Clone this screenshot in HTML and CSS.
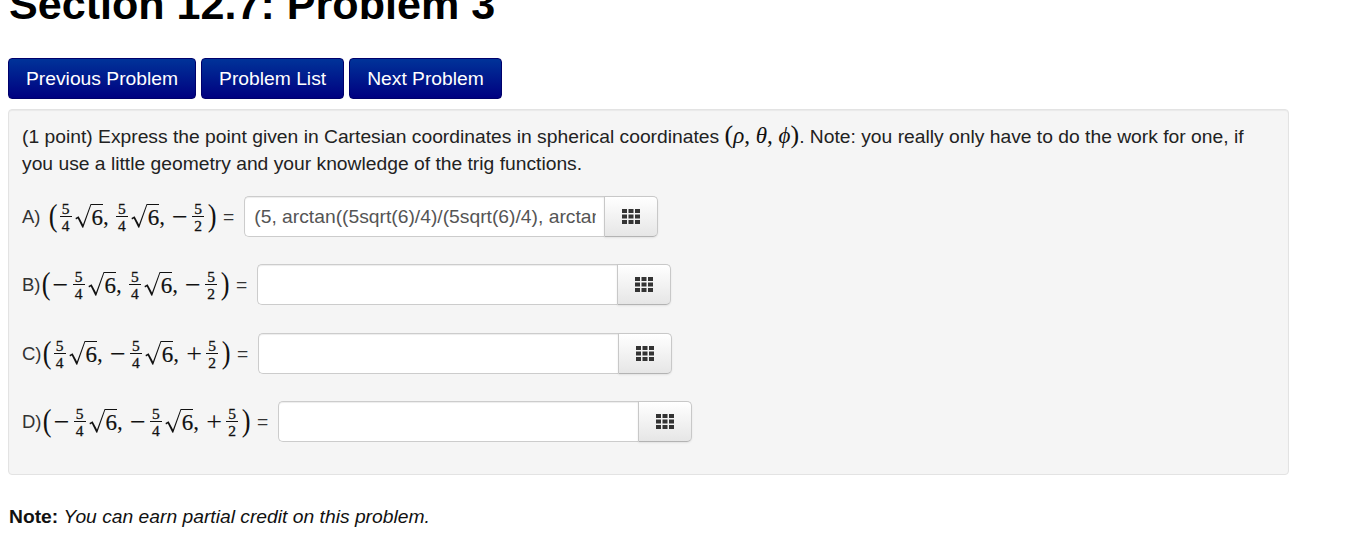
FILE: index.html
```html
<!DOCTYPE html>
<html lang="en">
<head>
<meta charset="utf-8">
<title>Section 12.7: Problem 3</title>
<link rel="stylesheet" href="styles.css">
</head>
<body>
<svg class="defs" width="0" height="0" aria-hidden="true">
  <defs>
    <symbol id="grid" viewBox="0 0 18 15">
      <g fill="#333">
        <rect x="0" y="0" width="5" height="4"/><rect x="6.5" y="0" width="5" height="4"/><rect x="13" y="0" width="5" height="4"/>
        <rect x="0" y="5.5" width="5" height="4"/><rect x="6.5" y="5.5" width="5" height="4"/><rect x="13" y="5.5" width="5" height="4"/>
        <rect x="0" y="11" width="5" height="4"/><rect x="6.5" y="11" width="5" height="4"/><rect x="13" y="11" width="5" height="4"/>
      </g>
    </symbol>
    <symbol id="radical" viewBox="0 0 17 24" preserveAspectRatio="none">
      <path d="M0.5 14 L3.6 12.2 L8 20.6 L15.6 0 L17 0 L17 1 L16.2 1 L8.2 23.8 L7.4 23.8 L2.8 14.6 L1 15.4 Z" fill="#111"/>
    </symbol>
  </defs>
</svg>
<h1 class="title">Section 12.7: Problem 3</h1>
<nav class="nav">
  <a class="nav-btn" href="#">Previous Problem</a>
  <a class="nav-btn" href="#">Problem List</a>
  <a class="nav-btn" href="#">Next Problem</a>
</nav>
<main class="well">
  <p class="prompt">(1 point) Express the point given in Cartesian coordinates in spherical coordinates <span class="math inline-math"><span class="big">(</span><i>ρ</i>, <i>θ</i>, <i>ϕ</i><span class="big">)</span></span>. Note: you really only have to do the work for one, if you use a little geometry and your knowledge of the trig functions.</p>

  <div class="row row-a">
    <span class="label">A)</span>
    <span class="math expr"><span class="paren">(</span><span class="frac"><span>5</span><span>4</span></span><span class="root"><svg class="rad"><use href="#radical"/></svg><span class="rad-body">6</span></span><span>,</span><span class="sp"></span><span class="frac"><span>5</span><span>4</span></span><span class="root"><svg class="rad"><use href="#radical"/></svg><span class="rad-body">6</span></span><span>,</span><span class="sp"></span><span class="op">−</span><span class="frac"><span>5</span><span>2</span></span><span class="paren">)</span></span>
    <span class="eq">=</span>
    <div class="combo">
      <input class="field" type="text" value="(5, arctan((5sqrt(6)/4)/(5sqrt(6)/4), arctan(sqrt(2)))">
      <button class="pick" type="button" aria-label="Equation editor"><svg class="pick-icon"><use href="#grid"/></svg></button>
    </div>
  </div>

  <div class="row row-b">
    <span class="label">B)</span>
    <span class="math expr"><span class="paren">(</span><span class="op">−</span><span class="frac"><span>5</span><span>4</span></span><span class="root"><svg class="rad"><use href="#radical"/></svg><span class="rad-body">6</span></span><span>,</span><span class="sp"></span><span class="frac"><span>5</span><span>4</span></span><span class="root"><svg class="rad"><use href="#radical"/></svg><span class="rad-body">6</span></span><span>,</span><span class="sp"></span><span class="op">−</span><span class="frac"><span>5</span><span>2</span></span><span class="paren">)</span></span>
    <span class="eq">=</span>
    <div class="combo">
      <input class="field" type="text">
      <button class="pick" type="button" aria-label="Equation editor"><svg class="pick-icon"><use href="#grid"/></svg></button>
    </div>
  </div>

  <div class="row row-c">
    <span class="label">C)</span>
    <span class="math expr"><span class="paren">(</span><span class="frac"><span>5</span><span>4</span></span><span class="root"><svg class="rad"><use href="#radical"/></svg><span class="rad-body">6</span></span><span>,</span><span class="sp"></span><span class="op">−</span><span class="frac"><span>5</span><span>4</span></span><span class="root"><svg class="rad"><use href="#radical"/></svg><span class="rad-body">6</span></span><span>,</span><span class="sp"></span><span class="op">+</span><span class="frac"><span>5</span><span>2</span></span><span class="paren">)</span></span>
    <span class="eq">=</span>
    <div class="combo">
      <input class="field" type="text">
      <button class="pick" type="button" aria-label="Equation editor"><svg class="pick-icon"><use href="#grid"/></svg></button>
    </div>
  </div>

  <div class="row row-d">
    <span class="label">D)</span>
    <span class="math expr"><span class="paren">(</span><span class="op">−</span><span class="frac"><span>5</span><span>4</span></span><span class="root"><svg class="rad"><use href="#radical"/></svg><span class="rad-body">6</span></span><span>,</span><span class="sp"></span><span class="op">−</span><span class="frac"><span>5</span><span>4</span></span><span class="root"><svg class="rad"><use href="#radical"/></svg><span class="rad-body">6</span></span><span>,</span><span class="sp"></span><span class="op">+</span><span class="frac"><span>5</span><span>2</span></span><span class="paren">)</span></span>
    <span class="eq">=</span>
    <div class="combo">
      <input class="field" type="text">
      <button class="pick" type="button" aria-label="Equation editor"><svg class="pick-icon"><use href="#grid"/></svg></button>
    </div>
  </div>
</main>
<p class="note"><b>Note:</b> <i>You can earn partial credit on this problem.</i></p>
</body>
</html>
```
FILE: styles.css
```css
* { box-sizing: border-box; }
html, body { height: 533px; overflow: hidden; }
body {
  margin: 0;
  padding: 0 8px;
  background: #fff;
  color: #222;
  font-family: "Liberation Sans", Arial, sans-serif;
  font-size: 19.27px;
  line-height: 27px;
}
.defs { position: absolute; }

.title {
  margin: -18px 0 0 1px;
  height: 76px;
  color: #000;
  font-size: 43.1px;
  line-height: 44px;
  font-weight: 700;
}

.nav { display: flex; gap: 5px; height: 41px; }
.nav-btn {
  display: flex;
  align-items: center;
  padding: 0 17px;
  border: 1px solid #00006b;
  border-radius: 4px;
  background: linear-gradient(#003399, #000080);
  color: #fff;
  text-decoration: none;
  white-space: nowrap;
}

.well {
  margin-top: 10px;
  width: 1281px;
  height: 366px;
  padding: 12px 13px 0;
  background: #f5f5f5;
  border: 1px solid #e3e3e3;
  border-radius: 4px;
  box-shadow: inset 0 1px 1px rgba(0,0,0,.05);
}
.prompt { margin: 0; height: 54px; }

.math { font-family: "Liberation Serif", "DejaVu Serif", serif; color: #111; }
.inline-math { font-size: 23px; }
.inline-math .big { font-size: 26px; line-height: 20px; }

.row { display: flex; align-items: center; height: 41px; margin-bottom: 27px; }
.row-a { margin-top: 20px; }
.row-b { margin-bottom: 28px; }
.label { font-size: 18.5px; color: #333; }
.row-a .label { margin-right: 7px; }

.expr { display: inline-flex; align-items: center; font-size: 23px; line-height: 23px; white-space: nowrap; }
.paren { width: 10px; text-align: center; font-size: 31px; line-height: 36px; transform: scaleX(.85); margin-top: -2px; }
.frac {
  display: inline-flex;
  flex-direction: column;
  align-items: center;
  width: 12px;
  margin: 0 3px 0 2px;
  font-size: 15.5px;
  line-height: 15px;
  -webkit-text-stroke: .3px #111;
}
.frac span:first-child { border-bottom: 1px solid #111; width: 100%; text-align: center; }
.frac span:last-child { padding-top: 1px; }
.root { display: inline-flex; align-items: flex-end; height: 25px; margin-top: -3px; }
.rad { width: 17px; height: 24px; display: block; }
.rad-body { border-top: 1px solid #111; height: 24px; line-height: 25px; -webkit-text-stroke: .2px #111; }
.sp { width: 5px; }
.op { width: 20px; text-align: center; font-size: 28px; }
.eq { margin: 0 10px 0 6px; color: #333; }

.combo { display: flex; height: 41px; }
.field {
  width: 360px;
  height: 41px;
  padding: 0 8px 0 9px;
  border: 1px solid #ccc;
  border-right: 0;
  border-radius: 5px 0 0 5px;
  background: #fff;
  color: #555;
  font: 19.27px/27px "Liberation Sans", Arial, sans-serif;
  box-shadow: inset 0 1px 1px rgba(0,0,0,.075);
  outline: none;
}
.pick {
  width: 54px;
  height: 41px;
  padding: 0;
  display: flex;
  align-items: center;
  justify-content: center;
  border: 1px solid #c8c8c8;
  border-bottom-color: #b3b3b3;
  border-radius: 0 5px 5px 0;
  background: linear-gradient(#fff, #e6e6e6);
  box-shadow: 0 1px 2px rgba(0,0,0,.08);
}
.pick-icon { width: 18px; height: 15px; display: block; }

.note { margin: 28px 0 0 1px; color: #111; }
```
